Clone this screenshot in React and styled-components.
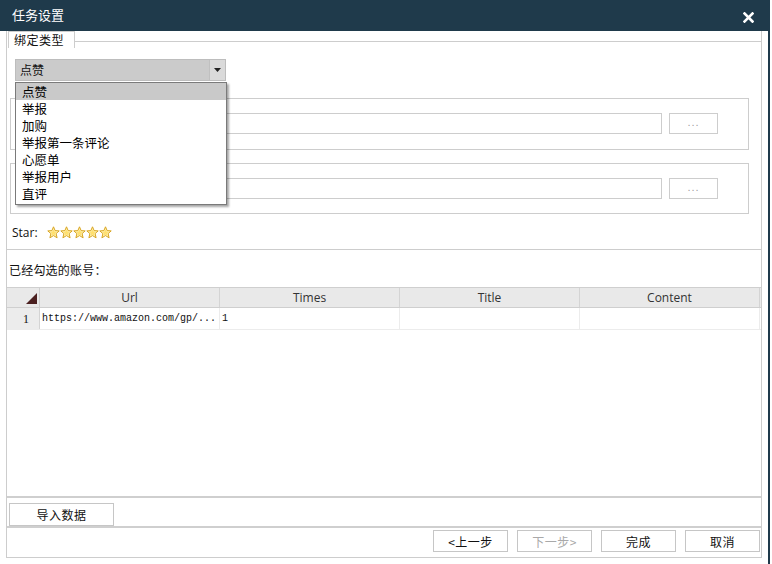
import React from 'react'
import styled, { createGlobalStyle } from 'styled-components'

const GlobalStyle = createGlobalStyle`
    body {
        margin: 0;
        background: #ffffff;
        font-family: "Noto Sans CJK SC", "Noto Sans", sans-serif;
        font-size: 12px;
        color: #000;
    }
`;

const bindTypes = ['点赞', '举报', '加购', '举报第一条评论', '心愿单', '举报用户', '直评']
const columns = [
    { key: 'url', title: 'Url', width: 180 },
    { key: 'times', title: 'Times', width: 180 },
    { key: 'title', title: 'Title', width: 180 },
    { key: 'content', title: 'Content', width: 180 },
]
const rows = [
    { url: 'https://www.amazon.com/gp/...', times: '1', title: '', content: '' },
]

const Star = () => (
    <svg width="13" height="13" viewBox="0 0 13 13">
        <polygon
            points="6.5,0.8 8.1,4.6 12.2,4.9 9.1,7.6 10.1,11.8 6.5,9.6 2.9,11.8 3.9,7.6 0.8,4.9 4.9,4.6"
            fill="#fff3b8"
            stroke="#d9a521"
            strokeWidth="1"
            strokeLinejoin="round"
        />
        <polygon
            points="6.5,3.2 7.4,5.6 9.8,5.8 8,7.4 8.5,9.8 6.5,8.5 4.5,9.8 5,7.4 3.2,5.8 5.6,5.6"
            fill="#ffe070"
        />
    </svg>
)

const App = () => {
    return (
        <Window>
            <GlobalStyle />
            <TitleBar>
                <Title>任务设置</Title>
                <Close>
                    <svg width="11" height="11" viewBox="0 0 11 11">
                        <path d="M1.5 1.5 L9.5 9.5 M9.5 1.5 L1.5 9.5" stroke="#fff" strokeWidth="2.6" strokeLinecap="square" />
                    </svg>
                </Close>
            </TitleBar>
            <Frame>
                <TabHeader>
                    <Tab>绑定类型</Tab>
                    <TabLine />
                </TabHeader>
                <TabContent>
                    <ComboWrap>
                        <Combo>
                            <ComboText>点赞</ComboText>
                            <ComboArrow>
                                <svg width="7" height="4" viewBox="0 0 7 4">
                                    <polygon points="0,0 7,0 3.5,4" fill="#222" />
                                </svg>
                            </ComboArrow>
                        </Combo>
                        <DropList>
                            {bindTypes.map((t, i) => (
                                <DropItem key={t} selected={i === 0}>{t}</DropItem>
                            ))}
                        </DropList>
                    </ComboWrap>
                    <GroupBox>
                        <PathInput />
                        <BrowseButton>...</BrowseButton>
                    </GroupBox>
                    <GroupBox second>
                        <PathInput />
                        <BrowseButton>...</BrowseButton>
                    </GroupBox>
                    <StarRow>
                        <StarLabel>Star:</StarLabel>
                        <Stars>
                            {[0, 1, 2, 3, 4].map(i => <Star key={i} />)}
                        </Stars>
                    </StarRow>
                </TabContent>
                <SectionLabel>已经勾选的账号：</SectionLabel>
                <Grid>
                    <HeaderRow>
                        <CornerCell>
                            <svg width="12" height="12" viewBox="0 0 12 12">
                                <polygon points="11,0 11,11 0,11" fill="#4b2020" />
                            </svg>
                        </CornerCell>
                        {columns.map(c => (
                            <HeaderCell key={c.key} style={{ width: c.width }}>{c.title}</HeaderCell>
                        ))}
                    </HeaderRow>
                    {rows.map((r, i) => (
                        <DataRow key={i}>
                            <RowHeader>{i + 1}</RowHeader>
                            {columns.map(c => (
                                <DataCell key={c.key} style={{ width: c.width }}>{r[c.key]}</DataCell>
                            ))}
                        </DataRow>
                    ))}
                </Grid>
                <ImportRow>
                    <Button wide>导入数据</Button>
                </ImportRow>
                <Footer>
                    <Button>&lt;上一步</Button>
                    <Button disabled>下一步&gt;</Button>
                    <Button>完成</Button>
                    <Button>取消</Button>
                </Footer>
            </Frame>
        </Window>
    )
}

const Window = styled.div`
    width: 768px;
    height: 564px;
    border-right: 2px solid #1f3a4b;
    display: flex;
    flex-direction: column;
    background: #fff;
    overflow: hidden;
`;
const TitleBar = styled.div`
    height: 31px;
    flex: none;
    background: #1f3a4b;
    display: flex;
    align-items: center;
    justify-content: space-between;
    padding: 0 14px 0 12px;
`;
const Title = styled.div`
    color: #fff;
    font-size: 13px;
    line-height: 16px;
    margin-top: -2px;
`;
const Close = styled.div`
    display: flex;
    align-items: center;
    margin-top: 4px;
`;
const Frame = styled.div`
    margin: 0 6px 0 6px;
    width: 754px;
    height: 526px;
    border: 1px solid #cdcdcd;
    border-top: none;
    display: flex;
    flex-direction: column;
`;
const TabHeader = styled.div`
    display: flex;
    height: 17px;
    flex: none;
`;
const Tab = styled.div`
    width: 67px;
    height: 17px;
    margin-left: 1px;
    box-sizing: border-box;
    border: 1px solid #cdcdcd;
    border-bottom: none;
    padding-left: 5px;
    font-size: 12px;
    line-height: 15px;
    color: #111;
    letter-spacing: 0.5px;
`;
const TabLine = styled.div`
    flex: 1;
    margin-top: 10px;
    border-top: 1px solid #cdcdcd;
`;
const TabContent = styled.div`
    flex: none;
    display: flex;
    flex-direction: column;
    padding: 11px 12px 8px 3px;
    border-bottom: 1px solid #cdcdcd;
`;
const ComboWrap = styled.div`
    position: relative;
    margin-left: 5px;
    width: 211px;
    z-index: 2;
`;
const Combo = styled.div`
    height: 22px;
    box-sizing: border-box;
    border: 1px solid #bdbdbd;
    background: #cbcbcb;
    display: flex;
`;
const ComboText = styled.div`
    flex: 1;
    padding-left: 4px;
    font-size: 12px;
    line-height: 19px;
    color: #111;
`;
const ComboArrow = styled.div`
    width: 15px;
    background: #dadada;
    border-left: 1px solid #c0c0c0;
    display: flex;
    align-items: center;
    justify-content: center;
`;
const DropList = styled.div`
    position: absolute;
    top: 23px;
    left: 0;
    width: 212px;
    box-sizing: border-box;
    border: 1px solid #7a7a7a;
    background: #fff;
    box-shadow: 2px 2px 2px rgba(0, 0, 0, 0.35);
    padding-bottom: 2px;
`;
const DropItem = styled.div`
    height: 17px;
    padding-left: 6px;
    font-size: 12.5px;
    line-height: 17px;
    overflow: hidden;
    color: #000;
    background: ${({ selected }) => (selected ? '#c9c9c9' : '#fff')};
`;
const GroupBox = styled.div`
    margin-top: ${({ second }) => (second ? '13px' : '17px')};
    height: ${({ second }) => (second ? '51px' : '52px')};
    box-sizing: border-box;
    border: 1px solid #cdcdcd;
    display: flex;
    align-items: flex-start;
    padding: 14px 30px 0 10px;
    gap: 7px;
`;
const PathInput = styled.div`
    flex: 1;
    height: 21px;
    box-sizing: border-box;
    border: 1px solid #cdcdcd;
    background: #fff;
`;
const BrowseButton = styled.div`
    width: 49px;
    height: 21px;
    box-sizing: border-box;
    border: 1px solid #cdcdcd;
    color: #a0a0a0;
    font-family: "Liberation Sans", sans-serif;
    font-size: 11px;
    line-height: 17px;
    text-align: center;
    letter-spacing: 1px;
`;
const StarRow = styled.div`
    margin-top: 9px;
    height: 18px;
    display: flex;
    align-items: center;
    padding-left: 2px;
`;
const StarLabel = styled.div`
    font-family: "Open Sans", "Liberation Sans", sans-serif;
    font-size: 12px;
    color: #111;
    width: 35px;
`;
const Stars = styled.div`
    display: flex;
`;
const SectionLabel = styled.div`
    height: 36px;
    flex: none;
    display: flex;
    align-items: center;
    padding: 1px 0 0 2px;
    font-size: 12px;
    color: #111;
    letter-spacing: 0.2px;
`;
const Grid = styled.div`
    height: 209px;
    flex: none;
    border-bottom: 2px solid #cfcfcf;
    background: #fff;
`;
const HeaderRow = styled.div`
    display: flex;
    height: 21px;
    box-sizing: border-box;
    border-top: 1px solid #cfcfcf;
    border-bottom: 1px solid #cfcfcf;
    background: #e9e9e9;
`;
const CornerCell = styled.div`
    width: 33px;
    box-sizing: border-box;
    border-right: 1px solid #cfcfcf;
    display: flex;
    align-items: flex-end;
    justify-content: flex-end;
    padding: 0 1px 2px 0;
`;
const HeaderCell = styled.div`
    box-sizing: border-box;
    border-right: 1px solid #d4d4d4;
    text-align: center;
    font-family: "Open Sans", "Liberation Sans", sans-serif;
    font-size: 12px;
    line-height: 19px;
    color: #333;
`;
const DataRow = styled.div`
    display: flex;
    height: 22px;
    box-sizing: border-box;
    border-bottom: 1px solid #ececec;
`;
const RowHeader = styled.div`
    width: 33px;
    box-sizing: border-box;
    background: #ececec;
    border-right: 1px solid #d4d4d4;
    padding-left: 16px;
    font-family: "Liberation Serif", serif;
    font-size: 12px;
    line-height: 22px;
    color: #111;
`;
const DataCell = styled.div`
    box-sizing: border-box;
    border-right: 1px solid #ececec;
    padding-left: 2px;
    font-family: "Liberation Mono", monospace;
    font-size: 10px;
    line-height: 22px;
    color: #111;
    white-space: nowrap;
    overflow: hidden;
`;
const ImportRow = styled.div`
    height: 30px;
    flex: none;
    border-bottom: 2px solid #cfcfcf;
    padding: 5px 0 0 2px;
    box-sizing: border-box;
`;
const Button = styled.div`
    width: ${({ wide }) => (wide ? '105px' : '75px')};
    height: ${({ wide }) => (wide ? '23px' : '22px')};
    box-sizing: border-box;
    border: 1px solid #c6c6c6;
    background: #fff;
    display: flex;
    align-items: center;
    justify-content: center;
    font-size: 12px;
    color: ${({ disabled }) => (disabled ? '#a9a9a9' : '#111')};
    letter-spacing: 0.5px;
`;
const Footer = styled.div`
    flex: 1;
    display: flex;
    justify-content: flex-end;
    align-items: flex-start;
    padding: 2px 1px 0 0;
    gap: 9px;
`;

export default App
